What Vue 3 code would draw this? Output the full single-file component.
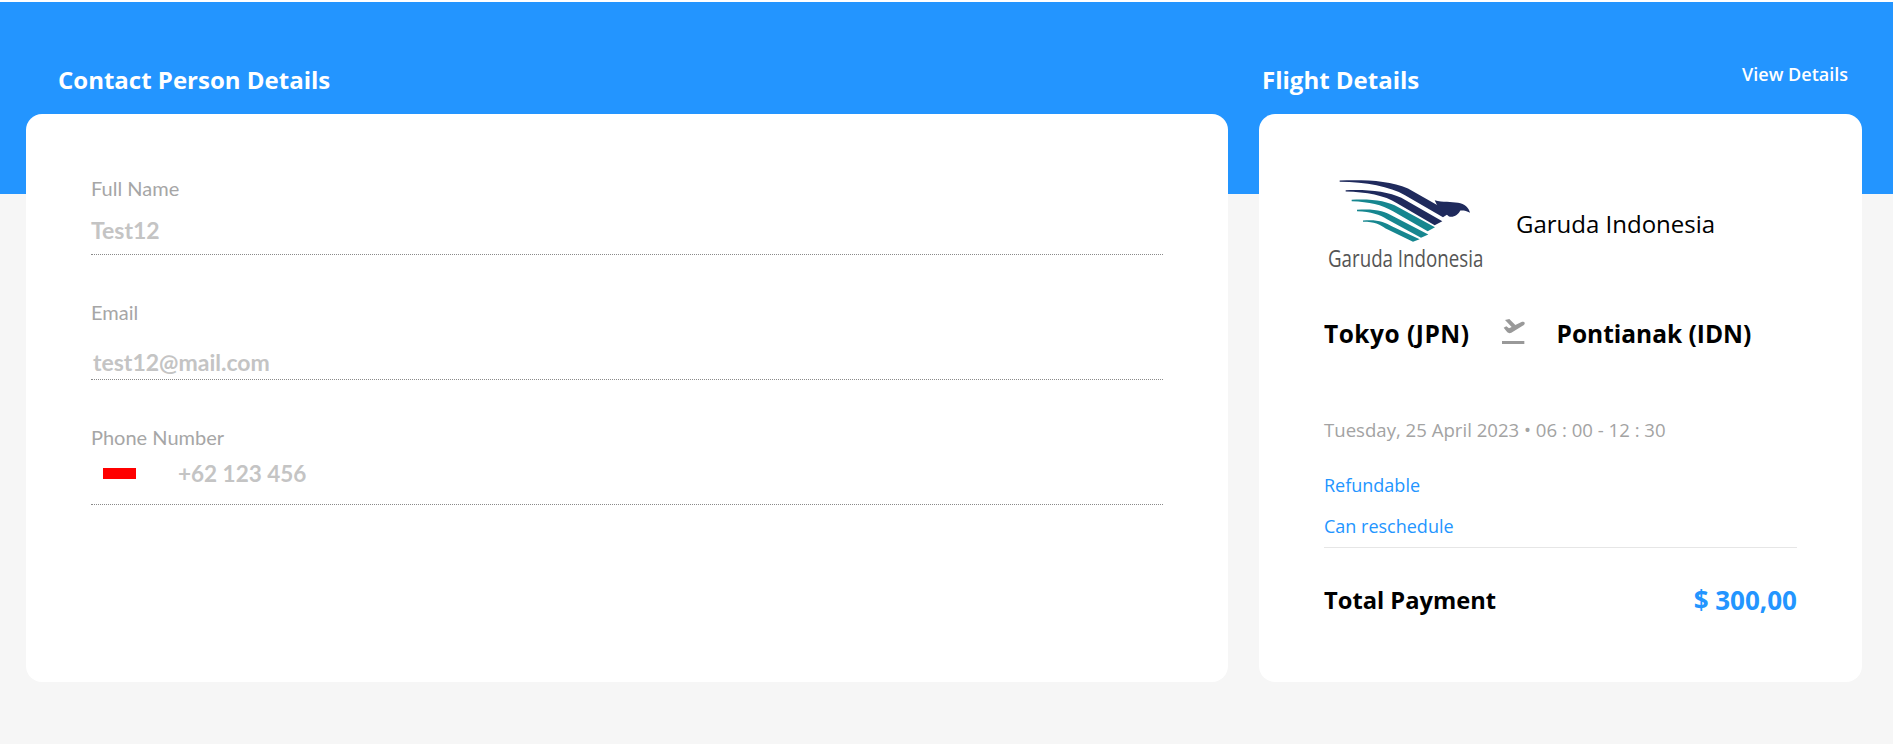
<script setup>
const fields = [
  { label: 'Full Name', value: 'Test12', kind: 'name' },
  { label: 'Email', value: 'test12@mail.com', kind: 'email' },
  { label: 'Phone Number', value: '+62 123 456', kind: 'phone' }
]
</script>

<template>
  <div class="page">
    <div class="band"></div>
    <main class="columns">
      <section class="col-left">
        <h2 class="title title-left">Contact Person Details</h2>
        <div class="card card-left">
          <div v-for="f in fields" :key="f.label" class="field" :class="'field-' + f.kind">
            <div class="label">{{ f.label }}</div>
            <div class="value">
              <span v-if="f.kind === 'phone'" class="flag"></span>
              <span>{{ f.value }}</span>
            </div>
          </div>
        </div>
      </section>

      <section class="col-right">
        <header class="right-head">
          <h2 class="title">Flight Details</h2>
          <a class="view">View Details</a>
        </header>
        <div class="card card-right">
          <div class="airline">
            <div class="logo">
              <svg class="logo-mark" viewBox="100 50 420 200" width="140" height="67">
                <path fill="#1f2a5c" d="M120 60C200 58 270 60 325 84L452 156L430 170L316 104C270 78 200 65 120 64Z" />
                <path fill="#1f2a5c" d="M138 89C200 86 265 92 305 112L428 182L405 194L292 128C255 104 200 95 138 93Z" />
                <path fill="#16868f" d="M156 118C220 115 262 122 296 140L406 200L384 212L280 152C245 132 210 124 156 122Z" />
                <path fill="#16868f" d="M172 148C225 144 255 152 282 168L386 222L364 232L262 176C240 162 215 153 172 152Z" />
                <path fill="#16868f" d="M190 180C232 176 255 184 278 198L360 236L340 244L258 204C240 192 225 184 190 184Z" />
                <path fill="#1f2a5c" d="M405 119C430 126 455 122 475 127C495 130 508 142 511 157C500 150 490 149 482 150C476 162 462 172 448 168L415 140Z" />
              </svg>
              <div class="logo-text">Garuda Indonesia</div>
            </div>
            <div class="airline-name">Garuda Indonesia</div>
          </div>

          <div class="route">
            <span class="city-from">Tokyo (JPN)</span>
            <svg class="plane" viewBox="0 0 120 114" width="40" height="38">
              <path fill="#999" d="M30 21L43 18L61 36L78 28C83 26 88 26 89 29C90 33 87 36 83 38L49 59C45 61 40 61 37 58L26 44L34 40L42 46L50 42Z" />
              <rect x="21" y="84" width="67" height="9" fill="#999" />
            </svg>
            <span>Pontianak (IDN)</span>
          </div>

          <div class="date">Tuesday, 25 April 2023 • 06 : 00 - 12 : 30</div>
          <div class="perk perk-first">Refundable</div>
          <div class="perk">Can reschedule</div>
          <div class="total">
            <span>Total Payment</span>
            <span class="amount">$ 300,00</span>
          </div>
        </div>
      </section>
    </main>
  </div>
</template>

<style>
html, body { margin: 0; background: #f6f6f6; }
</style>

<style scoped>
.page {
  position: relative;
  height: 744px;
  overflow: hidden;
  background: #f6f6f6;
  font-family: "Open Sans", "Noto Sans", sans-serif;
}
.band {
  position: absolute;
  left: 0;
  right: 0;
  top: 2px;
  height: 192px;
  background: #2395ff;
}
.page::before {
  content: "";
  position: absolute;
  left: 0;
  right: 0;
  top: 0;
  height: 2px;
  background: #fff;
}
.columns {
  position: relative;
  display: flex;
  gap: 31px;
  padding: 0 31px 0 26px;
}
.col-left { width: 1202px; flex: none; }
.col-right { width: 603px; flex: none; }
.title {
  margin: 0;
  height: 114px;
  box-sizing: border-box;
  padding-top: 63px;
  font-size: 24px;
  line-height: 33px;
  font-weight: 700;
  color: #fff;
  white-space: nowrap;
}
.title-left { padding-left: 32px; }
.right-head {
  display: flex;
  justify-content: space-between;
  padding: 0 14px 0 3px;
}
.view {
  padding-top: 62px;
  font-size: 18px;
  line-height: 24px;
  font-weight: 600;
  color: #fff;
}
.card {
  height: 568px;
  box-sizing: border-box;
  background: #fff;
  border-radius: 16px;
}
.card-left { padding: 60px 65px 0; }
.field {
  display: flow-root;
  height: 125px;
}
.label {
  font-family: Lato, "Open Sans", sans-serif;
  font-size: 20px;
  line-height: 28px;
  color: #a6a6a6;
}
.value {
  display: flex;
  align-items: center;
  height: 53px;
  box-sizing: border-box;
  border-bottom: 1px dotted #8a8a8a;
  font-family: Lato, "Open Sans", sans-serif;
  font-size: 23px;
  font-weight: 700;
  color: #c4c4c4;
}
.field-email .label,
.field-phone .label { margin-top: -1px; }
.field-email .value,
.field-phone .value { height: 54px; }
.field-name .value { padding-top: 4px; }
.field-email .value { padding-left: 2px; padding-top: 18px; }
.field-phone .value { padding-bottom: 9px; font-size: 22.5px; }
.flag {
  width: 33px;
  height: 11px;
  margin: 0 42px 0 12px;
  background: #f00;
}
.card-right { padding: 63px 65px 0 65px; color: #000; }
.airline {
  display: flex;
  align-items: center;
  gap: 32px;
}
.logo {
  width: 160px;
}
.logo-mark { display: block; margin: 0 0 2px 9px; }
.logo-text {
  font-size: 24px;
  line-height: 24px;
  color: #555;
  white-space: nowrap;
  margin-left: 4px;
  width: 200px;
  transform: scaleX(.78);
  transform-origin: left center;
}
.airline-name {
  font-size: 24px;
  line-height: 32px;
}
.route {
  display: flex;
  align-items: center;
  margin-top: 47px;
  font-size: 24.5px;
  line-height: 34px;
  font-weight: 700;
  white-space: nowrap;
}
.city-from { letter-spacing: .5px; }
.plane { margin: -4px 22px 0 25px; }
.date {
  margin-top: 66px;
  font-size: 18.6px;
  line-height: 26px;
  color: #a3a3a3;
  white-space: nowrap;
}
.perk {
  font-size: 18px;
  line-height: 26px;
  color: #2395ff;
  margin-top: 15px;
}
.perk-first { margin-top: 29px; }
.total {
  display: flex;
  justify-content: space-between;
  align-items: center;
  margin-top: 8px;
  padding-top: 35px;
  border-top: 1px solid #e6e6e6;
  font-size: 23.7px;
  line-height: 34px;
  font-weight: 700;
}
.amount { color: #2395ff; font-size: 26px; }
</style>
